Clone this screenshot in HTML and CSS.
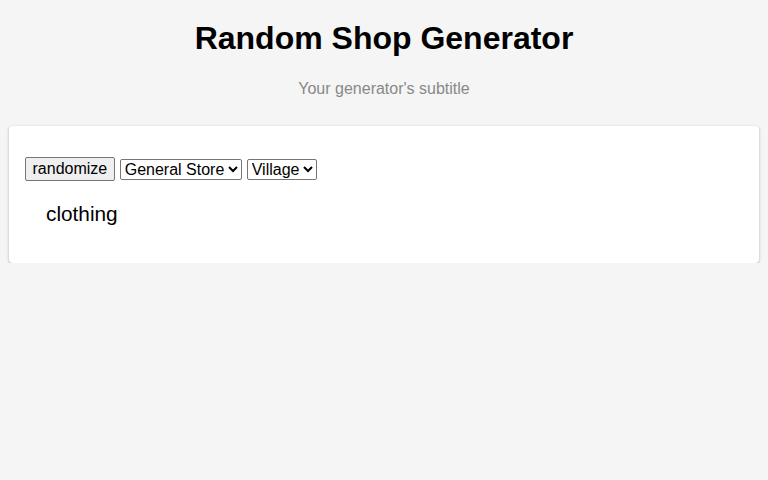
FILE: index.html
```html
<!DOCTYPE html>
<html>
<head>
<meta charset="utf-8">
<link rel="stylesheet" href="styles.css">
</head>
<body>
<header class="header">
  <h1 class="title">Random Shop Generator</h1>
  <p class="subtitle">Your generator's subtitle</p>
</header>
<main class="card">
  <div class="controls">
    <button class="btn">randomize</button>
    <select class="sel"><option>General Store</option></select>
    <select class="sel"><option>Village</option></select>
  </div>
  <div class="result">clothing</div>
</main>
</body>
</html>
```
FILE: styles.css
```css
html, body {
  margin: 0;
  padding: 0;
  background: #f5f5f5;
  font-family: "Liberation Sans", Arial, sans-serif;
}
.header {
  text-align: center;
  padding-top: 20px;
}
.title {
  margin: 0;
  font-size: 32px;
  line-height: 37px;
  font-weight: bold;
  color: #000;
}
.subtitle {
  margin: 23px 0 0;
  font-size: 16px;
  line-height: 18px;
  color: #888;
}
.card {
  margin: 28px 9px 0;
  background: #fff;
  border-radius: 4px;
  box-shadow: 0 1px 3px rgba(0,0,0,0.3);
  padding: 31px 16px 37px;
}
.controls {
  display: flex;
  align-items: center;
  gap: 5px;
}
.btn {
  font-family: "Liberation Sans", Arial, sans-serif;
  font-size: 16px;
  height: 24px;
  padding: 0 6.5px;
  background: #efefef;
  border: 1px solid #767676;
  border-radius: 2px;
  color: #000;
}
.sel {
  font-family: "Liberation Sans", Arial, sans-serif;
  font-size: 16px;
  height: 21px;
  background: #fff;
  border: 1px solid #767676;
  border-radius: 2px;
  color: #000;
}
.result {
  margin: 21px 0 0 21px;
  font-size: 20.8px;
  line-height: 24px;
  color: #000;
}
```
